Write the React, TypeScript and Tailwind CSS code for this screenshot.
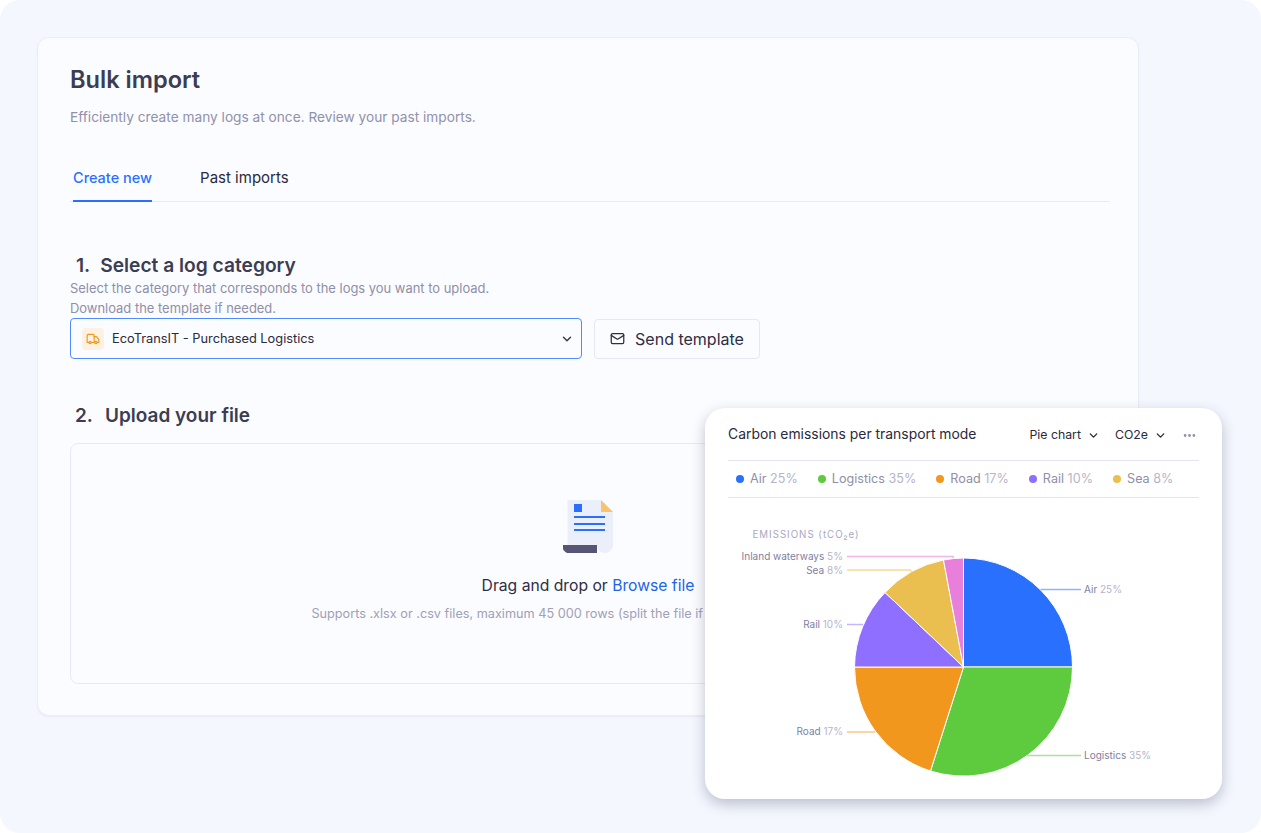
import { ChevronDown, Mail, Truck, MoreHorizontal } from "lucide-react"

const legend = [
  { name: "Air", pct: "25%", dot: "bg-[#2970ff]" },
  { name: "Logistics", pct: "35%", dot: "bg-[#5ecb3f]" },
  { name: "Road", pct: "17%", dot: "bg-[#f2971e]" },
  { name: "Rail", pct: "10%", dot: "bg-[#8f6fff]" },
  { name: "Sea", pct: "8%", dot: "bg-[#ebbf4f]" },
]

function DocIcon() {
  return (
    <svg width="50" height="54" viewBox="0 0 50 54" className="mr-[5px] block">
      <path d="M0 45h34v8H6a6 6 0 0 1-6-8z" fill="#565674" />
      <path d="M4.500 0H38l12 12v33a8 8 0 0 1-8 8 8 8 0 0 1-8-8H4.500z" fill="#ebeff9" />
      <path d="M38 0l12 12H38z" fill="#f6c46f" />
      <rect x="11" y="4" width="8" height="8" fill="#2970ff" />
      <rect x="11" y="16" width="31" height="2" fill="#2970ff" />
      <rect x="11" y="23" width="31" height="2" fill="#2970ff" />
      <rect x="11" y="29" width="31" height="2" fill="#2970ff" />
    </svg>
  )
}

function Label(props: { x: number; y: number; name: string; pct: string; end?: boolean }) {
  return (
    <text x={props.x} y={props.y} fontSize="10" textAnchor={props.end ? "end" : "start"} fill="#8080a0">
      {props.name} <tspan fill="#b5b5ca">{props.pct}</tspan>
    </text>
  )
}

// coords are relative to the chart box, which starts at 705,498 in the page
function PieChart() {
  const cx = 258.5
  const cy = 169
  return (
    <svg width="517" height="300" viewBox="0 0 517 300" className="block">
      <text x="47.500" y="40" fontSize="9.700" letterSpacing="1" fill="#a9a9c2">EMISSIONS (tCO₂e)</text>
      <g stroke="#ffffff" strokeWidth="1">
        <path d={`M${cx} ${cy}V60A109 109 0 0 1 367.500 ${cy}z`} fill="#2970ff" />
        <path d={`M${cx} ${cy}H367.500A109 109 0 0 1 225.500 273z`} fill="#5ecb3f" />
        <path d={`M${cx} ${cy}L225.500 273A109 109 0 0 1 149.500 ${cy}z`} fill="#f2971e" />
        <path d={`M${cx} ${cy}H149.500A109 109 0 0 1 180 94.500z`} fill="#8f6fff" />
        <path d={`M${cx} ${cy}L180 94.500A109 109 0 0 1 238.500 62z`} fill="#ebbf4f" />
        <path d={`M${cx} ${cy}L238.500 62A109 109 0 0 1 ${cx} 60z`} fill="#e77fdb" />
      </g>
      <g fill="none" strokeWidth="1.500">
        <path d="M335.500 91.500H376" stroke="#8fb5ff" />
        <path d="M322 257.500H376" stroke="#aee09c" />
        <path d="M142 234H170" stroke="#f9c88a" />
        <path d="M142 126.500H158" stroke="#c5b5ff" />
        <path d="M142 72H205L207 74" stroke="#f3dd9a" />
        <path d="M142 58.500H248V60" stroke="#f1b5e8" />
      </g>
      <Label x={379} y={95} name="Air" pct="25%" />
      <Label x={379} y={261} name="Logistics" pct="35%" />
      <Label x={138} y={237} name="Road" pct="17%" end />
      <Label x={138} y={130} name="Rail" pct="10%" end />
      <Label x={138} y={76} name="Sea" pct="8%" end />
      <Label x={138} y={62} name="Inland waterways" pct="5%" end />
    </svg>
  )
}

export default function App() {
  return (
    <div className="h-[833px] w-[1261px] overflow-hidden bg-white font-['Inter',sans-serif]">
      <div className="relative h-full rounded-[20px] bg-[#f4f7fe] p-[37px]">
        {/* Main card */}
        <div className="h-[679px] w-[1102px] rounded-xl border border-[#ebeef9] bg-[#fbfcff] px-8 pt-6 shadow-[0_1px_2px_rgba(90,100,160,0.08)]">
          <h1 className="text-[23.600px] leading-9 font-semibold text-[#3d3d52]">Bulk import</h1>
          <p className="mt-[9px] text-[13.700px] leading-5 text-[#9191aa]">
            Efficiently create many logs at once. Review your past imports.
          </p>

          {/* Tabs */}
          <div className="mt-[41px] flex w-[1040px] gap-12 border-b border-[#e6eaf6] pl-[3px]">
            <div className="-mb-px border-b-2 border-[#2970ff] pb-[12px] text-[14.500px] leading-5 font-medium text-[#2970ff]">
              Create new
            </div>
            <div className="text-[15px] leading-5 text-[#2a2a3c]">Past imports</div>
          </div>

          {/* Step 1 */}
          <h2 className="mt-[49px] flex gap-[10px] pl-[6px] text-[19.200px] leading-7 font-semibold text-[#3d3d52]">
            <span>1.</span>
            <span>Select a log category</span>
          </h2>
          <p className="mt-[-1px] text-[12.950px] leading-5 text-[#8f8fa8]">
            Select the category that corresponds to the logs you want to upload.
            <br />
            Download the template if needed.
          </p>
          <div className="flex items-center gap-3">
            <div className="flex h-[41px] w-[512px] items-center rounded border border-[#4f8bff] px-[11px]">
              <span className="flex h-[22px] w-[22px] items-center justify-center rounded bg-[#fdf1e2]">
                <Truck className="h-[14px] w-[14px] text-[#f2971e]" />
              </span>
              <span className="ml-2 flex-1 pt-px text-[12.800px] text-[#2a2a3c]">EcoTransIT - Purchased Logistics</span>
              <ChevronDown className="mr-[-4px] h-[14px] w-[14px] text-[#3a3a4f]" strokeWidth={2.5} />
            </div>
            <button className="flex h-10 w-[166px] items-center justify-center gap-[10px] rounded border border-[#e4e8f5] text-[16px] text-[#2e2e44]">
              <Mail className="h-[15px] w-[15px]" strokeWidth={2} />
              Send template
            </button>
          </div>

          {/* Step 2 */}
          <h2 className="mt-[43px] flex gap-[12px] pl-[5px] text-[19px] leading-7 font-semibold text-[#3d3d52]">
            <span>2.</span>
            <span>Upload your file</span>
          </h2>
          <div className="mt-[13px] flex h-[241px] w-[1040px] flex-col items-center rounded-lg border border-[#e6eaf6] pt-[56px]">
            <DocIcon />
            <p className="mt-[20px] mr-[4px] text-[15.700px] leading-6 text-[#2e2e44]">
              Drag and drop or <span className="text-[#1d64e8]">Browse file</span>
            </p>
            <p className="mt-[6px] text-[12.700px] leading-5 text-[#a0a0b6]">
              Supports .xlsx or .csv files, maximum 45 000 rows (split the file if you have many more rows)
            </p>
          </div>
        </div>

        {/* Floating chart card */}
        <div className="absolute top-[408px] left-[705px] h-[391px] w-[517px] rounded-[20px] bg-white shadow-[0_5px_14px_rgba(40,45,80,0.28)]">
          <div className="mx-[23px] flex h-[53px] items-center border-b border-[#e3e5f0]">
            <span className="flex-1 text-[13.900px] text-[#2a2a3c]">Carbon emissions per transport mode</span>
            <span className="mt-[3px] flex items-center gap-[6px] text-[12.300px] text-[#2a2a3c]">
              Pie chart <ChevronDown className="h-[13px] w-[13px]" strokeWidth={2.5} />
            </span>
            <span className="mt-[3px] ml-[15px] flex items-center gap-[6px] text-[12.300px] text-[#2a2a3c]">
              CO2e <ChevronDown className="h-[13px] w-[13px]" strokeWidth={2.5} />
            </span>
            <MoreHorizontal className="mt-[3px] mr-[2px] ml-[15px] h-[15px] w-[15px] text-[#8f8fa8]" strokeWidth={2.5} />
          </div>
          <div className="mx-[23px] flex h-[37px] items-center gap-5 border-b border-[#e3e5f0] pl-2 text-[12.600px] text-[#8f8fa8]">
            {legend.map((l) => (
              <span key={l.name} className="flex items-center pt-px">
                <span className={`mr-[6px] h-2 w-2 rounded-full ${l.dot}`} />
                {l.name}&nbsp;<span className="text-[#b5b5ca]">{l.pct}</span>
              </span>
            ))}
          </div>
          <PieChart />
        </div>
      </div>
    </div>
  )
}
